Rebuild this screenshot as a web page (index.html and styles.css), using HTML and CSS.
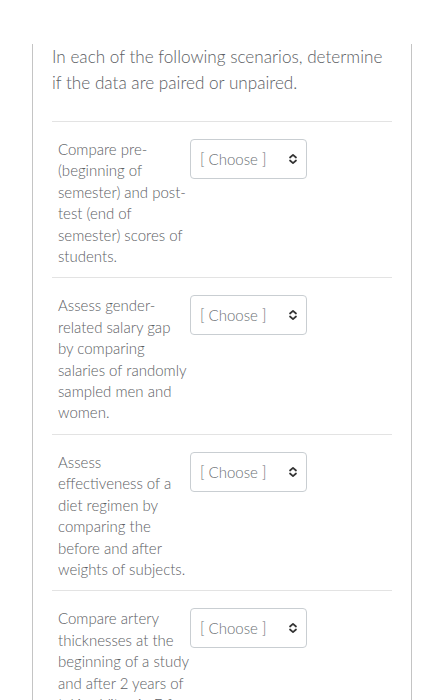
FILE: index.html
```html
<!DOCTYPE html>
<html>
<head>
<meta charset="utf-8">
<link rel="stylesheet" href="styles.css">
</head>
<body>
<div class="question">
  <p class="prompt">In each of the following scenarios, determine if the data are paired or unpaired.</p>
  <div class="rows">
    <div class="row">
      <div class="label">Compare pre-(beginning of semester) and post-test (end of semester) scores of students.</div>
      <div class="select"><span>[ Choose ]</span><svg class="arrows" viewBox="0 0 10 12" width="10" height="12"><path d="M2 4.5 L5 1.8 L8 4.5 M2 7.5 L5 10.2 L8 7.5" fill="none" stroke="#333" stroke-width="1.7" stroke-linecap="round" stroke-linejoin="round"/></svg></div>
    </div>
    <div class="row">
      <div class="label">Assess gender-related salary gap by comparing salaries of randomly sampled men and women.</div>
      <div class="select"><span>[ Choose ]</span><svg class="arrows" viewBox="0 0 10 12" width="10" height="12"><path d="M2 4.5 L5 1.8 L8 4.5 M2 7.5 L5 10.2 L8 7.5" fill="none" stroke="#333" stroke-width="1.7" stroke-linecap="round" stroke-linejoin="round"/></svg></div>
    </div>
    <div class="row">
      <div class="label">Assess effectiveness of a diet regimen by comparing the before and after weights of subjects.</div>
      <div class="select"><span>[ Choose ]</span><svg class="arrows" viewBox="0 0 10 12" width="10" height="12"><path d="M2 4.5 L5 1.8 L8 4.5 M2 7.5 L5 10.2 L8 7.5" fill="none" stroke="#333" stroke-width="1.7" stroke-linecap="round" stroke-linejoin="round"/></svg></div>
    </div>
    <div class="row">
      <div class="label">Compare artery thicknesses at the beginning of a study and after 2 years of taking Vitamin E for the same group of subjects.</div>
      <div class="select"><span>[ Choose ]</span><svg class="arrows" viewBox="0 0 10 12" width="10" height="12"><path d="M2 4.5 L5 1.8 L8 4.5 M2 7.5 L5 10.2 L8 7.5" fill="none" stroke="#333" stroke-width="1.7" stroke-linecap="round" stroke-linejoin="round"/></svg></div>
    </div>
  </div>
</div>
</body>
</html>
```
FILE: styles.css
```css
html, body {
  margin: 0;
  padding: 0;
  background: #ffffff;
}
body {
  font-family: Lato, "Open Sans", sans-serif;
  font-weight: 300;
  color: #5c6064;
  width: 444px;
  height: 700px;
  overflow: hidden;
}
.question {
  margin: 44px 0 0 32px;
  width: 340px;
  padding: 0 19px 0 19px;
  border-left: 1px solid #c4c4c4;
  border-right: 1px solid #c4c4c4;
  min-height: 700px;
}
.prompt {
  margin: 0;
  font-size: 17.15px;
  line-height: 26px;
  padding-bottom: 25px;
}
.row {
  border-top: 1px solid #e3e3e3;
  display: grid;
  grid-template-columns: 131px 117px;
  column-gap: 1px;
  align-items: start;
  padding: 17px 0 10px 6px;
}
.label {
  font-size: 15px;
  line-height: 21.4px;
}
.select {
  margin-top: 0px;
  box-sizing: border-box;
  height: 40px;
  border: 1px solid #c9ced2;
  border-radius: 4px;
  display: flex;
  align-items: center;
  justify-content: space-between;
  padding: 0 8px 0 9px;
  font-size: 15px;
  color: #6b7074;
  background: #fff;
}
.arrows {
  display: block;
}
```
